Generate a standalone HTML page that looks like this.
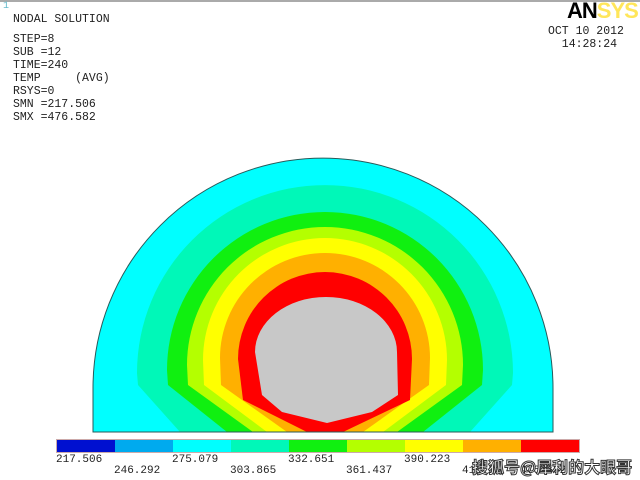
<!DOCTYPE html>
<html><head><style>
body{margin:0;width:640px;height:480px;background:#fff;position:relative;overflow:hidden;font-family:"Liberation Mono",monospace;}
.t{position:absolute;font-size:11.5px;color:#222;white-space:pre;line-height:13px;}
</style></head><body>
<div style="position:absolute;left:0;top:0;width:640px;height:2px;background:#aaa"></div>
<div class="t" style="left:3px;top:0;color:#6bc;font-size:10px">1</div>
<div class="t" style="left:13px;top:13px">NODAL SOLUTION</div>
<div class="t" style="left:13px;top:33px">STEP=8
SUB =12
TIME=240
TEMP     (AVG)
RSYS=0
SMN =217.506
SMX =476.582</div>
<div style="position:absolute;left:567px;top:-2px;font:bold 22px 'Liberation Sans',sans-serif;letter-spacing:-1px"><span style="color:#000">AN</span><span style="color:#ffe65a">SYS</span></div>
<div class="t" style="left:548px;top:25px">OCT 10 2012
  14:28:24</div>
<svg width="640" height="480" style="position:absolute;left:0;top:0">
<path d="M93,432 L93,388 A230 230 0 0 1 553,388 L553,432 Z" fill="#00ffff" stroke="#2a5a5a" stroke-width="1"/>
<g>
<path d="M180,432 L138,385 L137,373 A188 188 0 0 1 513,373 L512,385 L470,432 Z" fill="#00f8b8"/>
<path d="M227,432 L168,385 L167,370 A158 158 0 0 1 483,370 L482,385 L423,432 Z" fill="#10f010"/>
<path d="M253,432 L188,385 L187,365 A138 138 0 0 1 463,365 L462,385 L397,432 Z" fill="#b4ff00"/>
<path d="M267,432 L204,385 L203,360 A122 122 0 0 1 447,360 L446,385 L383,432 Z" fill="#ffff00"/>
<path d="M287,432 L221,385 L220,358 A105 105 0 0 1 430,358 L429,385 L363,432 Z" fill="#ffb000"/>
<path d="M307,432 L243,400 L238,359 A87 87 0 0 1 412,359 L410,400 L343,432 Z" fill="#ff0000"/>
<path d="M255,352 A71 55 0 0 1 397,352 L398,395 L372,412 L327,423 L282,412 L262,395 Z" fill="#c8c8c8"/>
</g>
<line x1="93" y1="432" x2="553" y2="432" stroke="#2a5a5a"/>
<g>
<rect x="57" y="440" width="58" height="12" fill="#0010d0"/>
<rect x="115" y="440" width="58" height="12" fill="#00aaee"/>
<rect x="173" y="440" width="58" height="12" fill="#00ffff"/>
<rect x="231" y="440" width="58" height="12" fill="#00f8b8"/>
<rect x="289" y="440" width="58" height="12" fill="#10f010"/>
<rect x="347" y="440" width="58" height="12" fill="#b4ff00"/>
<rect x="405" y="440" width="58" height="12" fill="#ffff00"/>
<rect x="463" y="440" width="58" height="12" fill="#ffb000"/>
<rect x="521" y="440" width="58" height="12" fill="#ff0000"/>
<rect x="56.5" y="439.5" width="523" height="13" fill="none" stroke="#caa" stroke-width="1"/>
</g>
</svg>
<div class="t" style="left:56px;top:454px;font-size:11px">217.506</div>
<div class="t" style="left:114px;top:465px;font-size:11px">246.292</div>
<div class="t" style="left:172px;top:454px;font-size:11px">275.079</div>
<div class="t" style="left:230px;top:465px;font-size:11px">303.865</div>
<div class="t" style="left:288px;top:454px;font-size:11px">332.651</div>
<div class="t" style="left:346px;top:465px;font-size:11px">361.437</div>
<div class="t" style="left:404px;top:454px;font-size:11px">390.223</div>
<div class="t" style="left:462px;top:465px;font-size:11px">419.01</div>
<div class="t" style="left:520px;top:465px;font-size:11px">476.582</div>
<div style="position:absolute;left:472px;top:454px;font:bold 16px 'Noto Sans CJK SC',sans-serif;color:#fff;-webkit-text-stroke:1px #333;white-space:nowrap">搜狐号@犀利的大眼哥</div>
</body></html>
